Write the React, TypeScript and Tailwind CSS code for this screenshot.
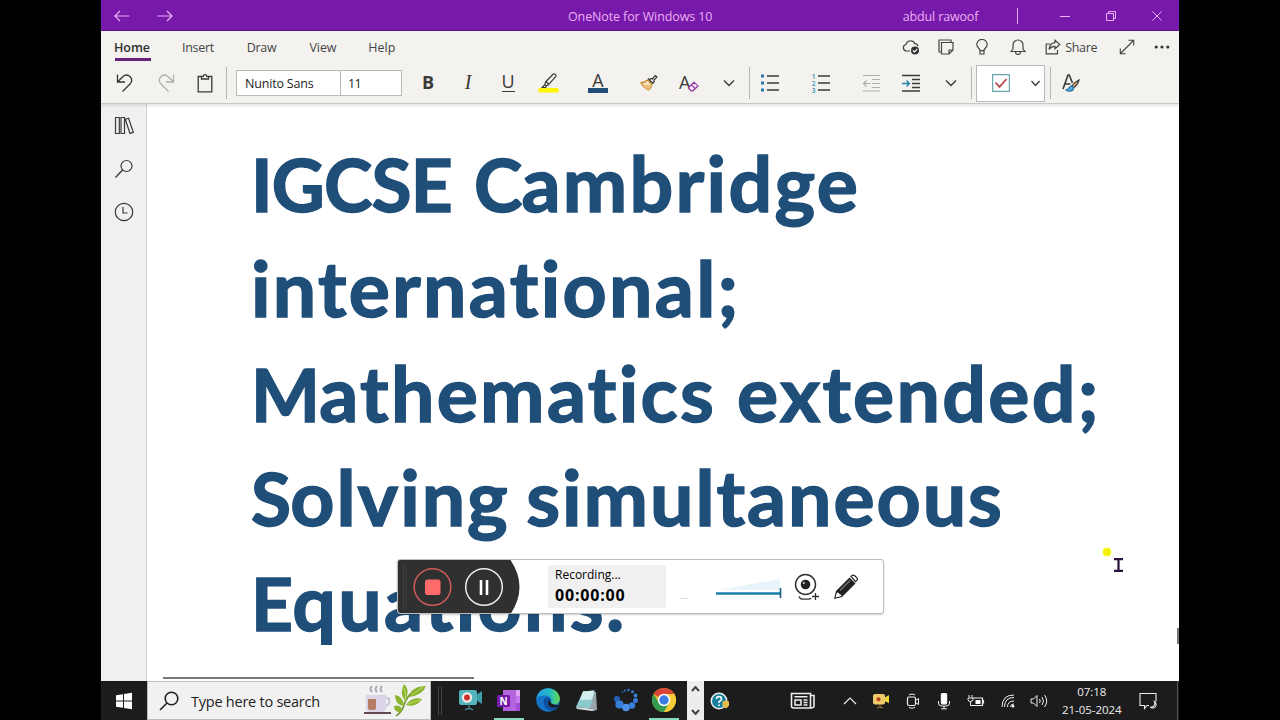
import React from "react";

type IconProps = { w: number; h: number; className?: string; children: React.ReactNode };

function Icon({ w, h, className = "", children }: IconProps) {
  return (
    <svg width={w} height={h} viewBox={`0 0 ${w} ${h}`} fill="none" stroke="currentColor" strokeWidth="1.2" className={`shrink-0 ${className}`}>
      {children}
    </svg>
  );
}

function Cell({ className = "w-10", children }: { className?: string; children: React.ReactNode }) {
  return <div className={`flex h-full shrink-0 items-center justify-center ${className}`}>{children}</div>;
}

function Divider({ className = "" }: { className?: string }) {
  return <div className={`h-8 w-px shrink-0 bg-[#b9b7b5] ${className}`} />;
}

function Chevron() {
  return (
    <Icon w={12} h={8}>
      <path d="M1 1.5 6 6.5 11 1.5" strokeWidth="1.4" />
    </Icon>
  );
}

function TitleBar() {
  return (
    <header className="flex h-[31px] items-center border-b border-[#5c1487] bg-[#7719aa] pt-px text-[#eab0f5]">
      <Cell className="w-[41px]">
        <Icon w={16} h={12}>
          <path d="M15.5 6H1M6 1 1 6l5 5" />
        </Icon>
      </Cell>
      <Cell className="w-[46px]">
        <Icon w={16} h={12}>
          <path d="M.5 6H15M10 1l5 5-5 5" />
        </Icon>
      </Cell>
      <div className="ml-[380px] w-[337px] whitespace-nowrap text-[12.5px] tracking-[-0.12px] pt-[3px]">OneNote for Windows 10</div>
      <div className="w-[115px] whitespace-nowrap pt-[3px] text-[12.5px] tracking-[-0.15px]">abdul rawoof</div>
      <div className="h-4 w-px bg-[#eab0f5]" />
      <Cell className="ml-[24px] w-[46px]">
        <Icon w={10} h={10}>
          <path d="M0 5.5h10" strokeWidth="1" />
        </Icon>
      </Cell>
      <Cell className="w-[46px]">
        <Icon w={10} h={10}>
          <path d="M.5 2.5h7v7h-7zM2.5 2.500v-2h7v7h-2" strokeWidth="1" />
        </Icon>
      </Cell>
      <Cell className="w-[45px]">
        <Icon w={10} h={10}>
          <path d="M.5.5l9 9M9.500.5l-9 9" strokeWidth="1" />
        </Icon>
      </Cell>
    </header>
  );
}

function TabRow() {
  return (
    <nav className="flex h-8 items-center text-[12.5px] text-[#444]">
      <div className="ml-[13px] flex h-full w-9 flex-col items-center">
        <span className="mt-[7px] h-[20px] text-[12.5px] leading-[20px] font-semibold tracking-[0px] text-[#2f2f2f]">Home</span>
        <span className="ml-[2px] h-[3px] w-9 shrink-0 bg-[#68217a]" />
      </div>
      <span className="ml-[32px] w-[65px] pt-[2px] tracking-[-0.3px]">Insert</span>
      <span className="w-[63px] pt-[2px] tracking-[-0.3px]">Draw</span>
      <span className="w-[59px] pt-[2px] tracking-[-0.1px]">View</span>
      <span className="w-[528px] pt-[2px]">Help</span>
      <Cell className="w-[34px]">
        <Icon w={18} h={16} className="text-[#444]">
          <path d="M8 12H4.300A3.300 3.300 0 0 1 4 5.500 4.600 4.600 0 0 1 12.800 4.700c1.600 0 2.800.9 3.100 2.400" />
          <circle cx="13" cy="11.500" r="4" fill="#333" stroke="none" />
          <path d="M11 11.500l1.500 1.500 2.700-2.900" stroke="#fff" />
        </Icon>
      </Cell>
      <Cell className="w-[36px]">
        <Icon w={16} h={16} className="text-[#444]">
          <path d="M3 13H1V1h12v2M3.500 3.500h11.500v7.500l-4 4H3.500zM11 15v-4h4" />
        </Icon>
      </Cell>
      <Cell className="w-[36px]">
        <Icon w={14} h={16} className="text-[#444]">
          <path d="M5 11.500C5 9 1.800 8.800 1.800 5.600a5.200 5.200 0 0 1 10.400 0C12.200 8.800 9 9 9 11.500v3.500H5zM5 11.700h4" />
        </Icon>
      </Cell>
      <Cell className="w-[35px]">
        <Icon w={16} h={16} className="text-[#444]">
          <path d="M1 12.500 3 10V6a5 5 0 0 1 10 0v4l2 2.500zM5.500 13a2.500 2.500 0 0 0 5 0" />
        </Icon>
      </Cell>
      <Cell className="w-[35px]">
        <Icon w={16} h={16} className="text-[#444]">
          <path d="M5 5H1.200v9.800H12.500V11M10 1.200l4.800 4.300L10 9.800V7.300C7.500 7.200 5.500 8.200 4 10.300 4.500 6.500 6.500 4 10 3.700z" />
        </Icon>
      </Cell>
      <span className="-ml-[5px] w-[44px] pt-[2px] tracking-[-0.3px]">Share</span>
      <Cell className="w-[36px]">
        <Icon w={16} h={16} className="text-[#444]">
          <path d="M1.500 14.500l13-13M9.500 1.300h5.200v5.200M1.300 9.500v5.200h5.200" strokeWidth="1.1" />
        </Icon>
      </Cell>
      <Cell className="w-[34px]">
        <Icon w={16} h={4} className="text-[#333]">
          <g fill="currentColor" stroke="none">
            <circle cx="2.200" cy="2" r="1.600" />
            <circle cx="8" cy="2" r="1.600" />
            <circle cx="13.800" cy="2" r="1.600" />
          </g>
        </Icon>
      </Cell>
    </nav>
  );
}

function ToolRow() {
  return (
    <div className="flex h-10 items-center text-[#3b3a39]">
      <Cell className="w-12">
        <Icon w={18} h={20} className="text-[#333]">
          <path d="M1.500 1.500v7.500h7.500M2 8.500 7 3.500Q10.500.500 14 3.500q3.500 3.800 0 7.500L6.500 18.500" strokeWidth="1.300" />
        </Icon>
      </Cell>
      <Cell className="w-[34px]">
        <Icon w={18} h={20} className="text-[#b0aeac]">
          <path d="M16.500 1.500v7.500H9M16 8.500 11 3.500Q7.500.500 4 3.500q-3.500 3.800 0 7.500l7.500 7.500" strokeWidth="1.300" />
        </Icon>
      </Cell>
      <Cell className="w-[43px]">
        <Icon w={16} h={20}>
          <path d="M4.500 3.500H1.200v15.300h13.600V3.500h-3.300M4.500 6V3.300h1.800a1.700 1.700 0 0 1 3.400 0h1.800V6z" strokeWidth="1.300" />
        </Icon>
      </Cell>
      <Divider />
      <div className="ml-[9px] flex h-[26px] w-[166px] items-center border border-[#bbb9b7] bg-white text-[12.500px] text-[#222]">
        <span className="flex h-full w-[104px] items-center border-r border-[#bbb9b7] pt-[2px] pl-2 tracking-[-0.18px]">Nunito Sans</span>
        <span className="pt-[2px] pl-[7px] tracking-[-0.6px]">11</span>
      </div>
      <Cell className="ml-[6px] w-10">
        <span className="mb-[2px] text-[18px] font-bold">B</span>
      </Cell>
      <Cell>
        <span className="mb-[2px] font-['Liberation_Serif',serif] text-[20px] italic">I</span>
      </Cell>
      <Cell>
        <span className="-mt-px h-[19px] w-[13px] border-b border-[#3b3a39] text-center text-[18px] leading-[16px]">U</span>
      </Cell>
      <Cell>
        <Icon w={22} h={22}>
          <path d="M1.500 16h20v4.500h-20z" fill="#fff500" stroke="none" />
          <path d="M9 9.500l7-7.200c1.500-1.400 4 .7 2.700 2.400l-6.800 7.500zM8.800 9.500l-1 3.300 1.500 1 2.600-1.400M7.600 13l-2.400 2.500h3.500l.8-1.500" />
        </Icon>
      </Cell>
      <Cell className="w-[60px]">
        <div className="flex w-5 flex-col items-center border-b-[5px] border-[#1f4e79] pb-px">
          <span className="h-[14px] text-[18px] leading-[15px]">A</span>
        </div>
      </Cell>
      <Cell className="ml-px w-10">
        <Icon w={18} h={18}>
          <path d="M1 8.500c3.500.3 5.500-1.500 6.500-2.500l4.500 4.500C11.500 13 10 15 8.500 16 5.500 14.500 2.500 12 1 8.500z" fill="#f7e3c0" stroke="#c8852b" />
          <path d="M2.500 10.500c4 .8 7 .5 9 0-1 2.800-2 4.500-3 5.500-2.500-1.300-4.500-3-6-5.500z" fill="#eec078" stroke="none" />
          <path d="M8 4.500l5.300 5.200M9.500 5.800l1.500-1.300 1.300.5 3-3.500 1.700 1.600-3.200 3.100.6 1.500-1.500 1.500" />
        </Icon>
      </Cell>
      <Cell>
        <div className="flex items-start">
          <span className="w-[9px] text-[18px] leading-[17px]">A</span>
          <Icon w={11} h={11} className="mt-[7px]">
            <path d="M1 6l5-4.800 4 3.700L5 9.800H3.200L1 7.700zM3.500 4l3.700 3.700" fill="#f5e4f8" stroke="#8e3a9e" />
          </Icon>
        </div>
      </Cell>
      <Cell><Chevron /></Cell>
      <Divider />
      <Cell>
        <Icon w={18} h={18}>
          <path d="M6 2h12M6 9h12M6 16h12" strokeWidth="1.300" />
          <path d="M0 2h3M0 9h3M0 16h3" stroke="#2878ae" strokeWidth="3" />
        </Icon>
      </Cell>
      <Cell className="ml-[11px] w-10">
        <div className="flex items-center gap-[3px]">
          <div className="flex flex-col text-[6.500px] leading-[7px] font-semibold text-[#308db3]">
            <span>1</span>
            <span>2</span>
            <span>3</span>
          </div>
          <Icon w={12} h={18}>
            <path d="M0 2h12M0 9h12M0 16h12" strokeWidth="1.300" />
          </Icon>
        </div>
      </Cell>
      <Cell className="ml-[10px] w-10">
        <Icon w={18} h={18} className="text-[#b0aeac]">
          <path d="M1 1.500h17M10 5.500h8M10 9.500h8M10 13.500h8M1 17h17M8.500 9.500H1.500M4.500 6.500l-3 3 3 3" />
        </Icon>
      </Cell>
      <Cell>
        <Icon w={18} h={18}>
          <path d="M0 1.500h18M10 5.500h8M10 9.500h8M10 13.500h8M0 17h18" strokeWidth="1.300" />
          <path d="M0 9.500h7.500M4.500 6.500l3 3-3 3" stroke="#1c86a8" strokeWidth="1.300" />
        </Icon>
      </Cell>
      <Cell><Chevron /></Cell>
      <Divider />
      <div className="ml-1 flex h-[37px] w-[69px] items-center border border-[#bcbab8] bg-white">
        <Cell className="w-[48px]">
          <Icon w={18} h={18}>
            <path d="M.6.6h16.800v16.800H.6z" stroke="#6aa5ae" />
            <path d="M3.500 8.500l4 4.300L14.500 5" stroke="#b84a52" strokeWidth="1.800" />
          </Icon>
        </Cell>
        <Icon w={9} h={7} className="ml-[6px]">
          <path d="M.5 1l4 4.500 4-4.500" strokeWidth="1.300" />
        </Icon>
      </div>
      <Divider className="ml-[5px]" />
      <Cell>
        <Icon w={18} h={20}>
          <path d="M1 16 6 2h1.200L10.500 10M3 11h5.500" strokeWidth="1.600" />
          <path d="M17 7c-3 1.500-6 4-7.200 6l1.700 1.700c2-1.300 4.500-4 5.500-7.700z" fill="#e9b17b" />
          <path d="M9.800 13c-2.800-.3-2 3-5.800 4 3 2 7.800 1 7.500-2.300z" fill="#52b2e6" stroke="#26709d" />
        </Icon>
      </Cell>
    </div>
  );
}

function Sidebar() {
  return (
    <aside className="flex w-[46px] shrink-0 flex-col items-center border-r border-[#d3d4de] bg-[#f2f0ee] pt-[12px] text-[#3b3a39]">
      <Icon w={20} h={20}>
        <path d="M1.500 1.500h3.800v16H1.500zM7 1.500h3.500v16H7zM11.300 3.300l3.300-1.100 4.700 14.100-3.300 1.100z" />
      </Icon>
      <Icon w={20} h={20} className="mt-[23px]">
        <circle cx="12.500" cy="7" r="5.500" />
        <path d="M8.500 11 1.500 18.500" strokeWidth="1.400" />
      </Icon>
      <Icon w={20} h={20} className="mt-[23px]">
        <circle cx="10" cy="10" r="8.700" />
        <path d="M9 5v6h4.500" />
      </Icon>
    </aside>
  );
}

function Cap({ children }: { children: React.ReactNode }) {
  return <span className="text-[73px] tracking-[-0.8px]">{children}</span>;
}

function Note() {
  return (
    <main className="relative flex-1 overflow-hidden bg-white">
      <div className="pt-[26px] pl-[104px] font-['Lato',sans-serif] text-[77px] font-bold whitespace-nowrap text-[#1f4e79] [-webkit-text-stroke:1.500px_#1f4e79]">
        <div className="h-[104.800px] leading-[104.800px] tracking-[2.300px] [word-spacing:5px]"><Cap>IGCSE C</Cap>ambridge</div>
        <div className="h-[104.800px] leading-[104.800px] tracking-[2.300px]">international;</div>
        <div className="h-[104.800px] leading-[104.800px] tracking-[2.300px]"><Cap>M</Cap>athematics extended;</div>
        <div className="h-[104.800px] leading-[104.800px] tracking-[1.950px] [word-spacing:-4px]"><Cap>S</Cap>olving simultaneous</div>
        <div className="h-[104.800px] leading-[104.800px] tracking-[2.300px]"><Cap>E</Cap>quations.</div>
      </div>
      <div className="absolute top-[573px] left-4 h-[2px] w-[311px] bg-[#777]" />
      <div className="absolute top-[524px] right-0 h-4 w-[2px] bg-[#777]" />
      <div className="absolute top-[444px] left-[956px] size-[8px] rounded-full bg-[#f4f000] shadow-[0_0_3px_#ffff66]" />
      <svg className="absolute top-[454px] left-[967px]" width="10" height="14" viewBox="0 0 10 14">
        <path d="M0 1.200h9M0 12.800h9M4.500 1v12" stroke="#2c123f" strokeWidth="2.200" />
      </svg>
    </main>
  );
}

function Recorder() {
  return (
    <div className="absolute top-[559px] left-[397px] flex h-[55px] w-[487px] items-center overflow-hidden rounded-[3px] border border-[#bdbdbd] bg-white text-black shadow-[0_1px_2px_#0003]">
      <svg className="shrink-0" width="122" height="54" viewBox="0 0 122 54">
        <path d="M0 0h112.500q18 27 0 54H0z" fill="#303030" />
        <path d="M5.500 5v44M8 5v44" stroke="#3e3e3e" />
        <circle cx="34.500" cy="27" r="18.300" fill="none" stroke="#cf5a5c" strokeWidth="1.500" />
        <rect x="27" y="19.500" width="15.500" height="15.500" rx="2.500" fill="#ff6b6b" />
        <circle cx="86" cy="27" r="18.300" fill="none" stroke="#eee" strokeWidth="1.500" />
        <path d="M83 20v15M89 20v15" stroke="#fff" strokeWidth="2.600" />
      </svg>
      <div className="ml-[28px] flex h-[43px] w-[118px] shrink-0 flex-col rounded-[3px] bg-[#f0f0f0] pl-[7px]">
        <span className="h-[19px] text-[12px] leading-[19px] tracking-[0px]">Recording...</span>
        <span className="text-[16px] leading-[23px] font-bold tracking-[0.8px]">00:00:00</span>
      </div>
      <div className="mt-6 ml-[14px] h-px w-2 bg-[#ddd]" />
      <Icon w={67} h={22} className="ml-[28px]">
        <path d="M2 14 64 3v11z" fill="#e8f4f9" stroke="none" />
        <path d="M0 17.500h65" stroke="#1a80ad" strokeWidth="2.400" />
        <path d="M64.500 12v10.500" stroke="#1b6384" strokeWidth="1.700" />
      </Icon>
      <Icon w={26} h={28} className="ml-[11px] text-[#333]">
        <circle cx="11.500" cy="11.500" r="10" strokeWidth="1.500" />
        <circle cx="11.500" cy="11.500" r="4.800" fill="#222" stroke="none" />
        <circle cx="9.800" cy="10" r="1.200" fill="#aaa" stroke="none" />
        <path d="M5 23.500q1 2.700 4 2.700h5q2.500 0 3-1.200M18 23.500h7M21.500 20v7" strokeWidth="1.300" />
      </Icon>
      <Icon w={26} h={26} className="ml-[13px] text-[#222]">
        <path d="M1 25 3 17 16.500 3.500 22.500 9.500 9 23z" fill="currentColor" stroke="none" />
        <path d="M2.500 23.500l1.500-5q2.500 0 2.500 1.800 2 0 2 1.800z" fill="#fff" stroke="none" />
        <path d="M7 16.500 17 6.500" stroke="#777" />
        <path d="M18 2.500l1-1q1.500-1 3 .5l1.700 1.700q1.300 1.300.3 2.500l-1.500 1.500z" fill="#fff" />
      </Icon>
    </div>
  );
}

function SearchBox() {
  return (
    <div className="flex h-full w-[284px] shrink-0 items-center border border-[#bdbdbd] bg-[#f1f1f1] text-[#222]">
      <Icon w={20} h={20} className="ml-[11px]">
        <circle cx="12.500" cy="7.500" r="6.300" strokeWidth="1.600" />
        <path d="M8 12 1 19" strokeWidth="1.600" />
      </Icon>
      <span className="ml-[12px] w-[170px] pt-[2px] text-[14.500px] tracking-[-0.24px] whitespace-nowrap">Type here to search</span>
      <svg width="66" height="36" viewBox="0 0 66 36" className="ml-px">
        <path d="M10 9q-3-3 0-6M15 9q-3-3 0-6M20 9q-3-3 0-6" fill="none" stroke="#aaa1ad" strokeWidth="1.700" />
        <path d="M23 15h2q2.500 0 2.500 3.500T23 23" fill="none" stroke="#c9c1dc" strokeWidth="1.800" />
        <path d="M4 12h20v13q0 4-5 4H9q-5 0-5-4z" fill="#dcd5e8" />
        <path d="M6 16h8v9q0 2-2 2H8q-2 0-2-2z" fill="#b57d65" />
        <path d="M2 29h27v2H2z" fill="#634951" />
        <path d="M34 33q6-4 8-11t10-15" fill="none" stroke="#6a8f25" strokeWidth="1.500" />
        <path d="M42 1q7 6 1 17-6-8-1-17zM33 12q8 1 9 11-9-1-9-11zM32 23q8-2 8 6-8 1-8-6zM47 14q3-11 17-11-3 9-17 11zM44 22q6-9 16-6-6 9-16 6z" fill="#8bb52f" />
        <path d="M42 5q3 6 1 13M50 12l11-8M46 21l12-4" fill="none" stroke="#bfd965" />
      </svg>
    </div>
  );
}

function TaskApp({ active = false, children }: { active?: boolean; children: React.ReactNode }) {
  return (
    <div className="flex h-full w-[38.800px] shrink-0 flex-col items-center">
      <div className="flex h-[37px] items-center pt-px">
        <svg width="26" height="26" viewBox="0 0 26 26">{children}</svg>
      </div>
      {active && <div className="h-[2px] w-[30px] bg-[#87d9c3]" />}
    </div>
  );
}

function Taskbar() {
  return (
    <footer className="flex h-[39px] items-center bg-[#1c1c1c] text-[#eee]">
      <Cell className="w-[46px]">
        <svg width="18" height="18" viewBox="0 0 18 18" fill="#fff">
          <path d="M1 3.300 8 2.200v6.300H1zM9 2l8-1.200v7.700H9zM1 9.500h7v6.300l-7-1.100zM9 9.500h8v7.700L9 16z" />
        </svg>
      </Cell>
      <SearchBox />
      <div className="ml-[7px] h-[29px] w-[4px] border-x border-[#444]" />
      <div className="ml-[9px] flex h-full">
        <TaskApp>
          <path d="M19 8l6-4v13l-6-4z" fill="#3e9daa" />
          <rect x="2" y="3" width="18" height="15" rx="2" fill="#53b4be" />
          <circle cx="10" cy="10.500" r="5.200" fill="#f2e9e4" />
          <circle cx="10" cy="10.500" r="2.900" fill="#c92b25" />
          <path d="M12 16v6M8 23q4-3 8 0" fill="none" stroke="#4a8d96" strokeWidth="1.300" />
        </TaskApp>
        <TaskApp active>
          <path d="M7 3h17v21H7z" fill="#a34ad8" />
          <path d="M7 3h13v21H7z" fill="#b463df" />
          <path d="M20 3h4v6h-4z" fill="#dda2f5" />
          <path d="M20 9h4v7h-4z" fill="#c279e9" />
          <rect x="1" y="8" width="13" height="12" rx="1" fill="#7719aa" />
          <text x="7.500" y="17.500" textAnchor="middle" fontSize="10" fontWeight="700" fill="#fff">N</text>
        </TaskApp>
        <TaskApp>
          <defs>
            <linearGradient id="edgeTop" x1="0" x2="1">
              <stop stopColor="#2398e6" />
              <stop offset=".6" stopColor="#27bdbe" />
              <stop offset="1" stopColor="#68d64c" />
            </linearGradient>
          </defs>
          <circle cx="13" cy="13" r="11.800" fill="#1473c6" />
          <path d="M1.300 12C2.500 4.500 8 1.200 13 1.200c7 0 11.800 5.300 11.800 10.500 0 5-5.500 7.200-9.600 5 3-3.500.5-8-4.700-8.200C6.500 8.300 2.500 9.500 1.300 12z" fill="url(#edgeTop)" />
          <path d="M9.500 11.500c-3 5.500 1.500 12 7.500 12 3 0 5.500-2 6.500-4-4 1.500-9 .5-9.500-4-.2-2 .8-2.500.8-3.500-.8-1.800-4-2-5.300-.5z" fill="#0d4f9c" />
          <path d="M15 12.500c-.5 4 4 6 9 5.500l-1.500 2c-5 1.500-9 .3-9.300-4 0-1.500.8-2.300 1.800-3.500z" fill="#1c1c1c" />
        </TaskApp>
        <TaskApp>
          <path d="M9 4 22 5 23 23 14 21z" fill="#9aa5a9" />
          <path d="M9 4.500 20.500 3.500 16 21.500 2 20z" fill="#8cc9cf" />
          <path d="M9 4.500 20.500 3.500 18 12.500 6 13z" fill="#d2eeee" />
          <path d="M2 20l14 1.500 7 1.500-5 1L3 22z" fill="#d8dede" />
        </TaskApp>
        <TaskApp>
          <g fill="#377edb">
            <circle cx="4" cy="12" r="3.100" fill="#245eb5" />
            <circle cx="6.500" cy="17.500" r="4.100" />
            <circle cx="13" cy="20.500" r="3.800" fill="#4a92e8" />
            <circle cx="19" cy="18.500" r="3.200" />
            <circle cx="22.500" cy="13.500" r="2.500" />
            <circle cx="22.500" cy="8.500" r="1.900" />
            <circle cx="19.500" cy="4.800" r="1.500" />
            <circle cx="15.500" cy="3" r="1.200" />
            <circle cx="11.800" cy="3.500" r="1" />
            <circle cx="9.500" cy="5.300" r=".8" />
          </g>
        </TaskApp>
        <TaskApp active>
          <circle cx="13" cy="13" r="12" fill="#dfb92b" />
          <path d="M13 13 2.600 7A12 12 0 0 1 23.400 7z" fill="#d94436" />
          <path d="M2.600 7A12 12 0 0 0 13 25l5.200-9H7.800z" fill="#359b50" />
          <path d="M23.400 7H13l5.200 9L13 25A12 12 0 0 0 23.400 7z" fill="#f8cc38" />
          <circle cx="13" cy="13" r="6.200" fill="#fff" />
          <circle cx="13" cy="13" r="4.700" fill="#3b7de0" />
        </TaskApp>
      </div>
      <div className="ml-[3px] flex h-full w-[17px] flex-col items-center justify-between bg-[#ededed] py-[5px] text-[#444]">
        <Icon w={9} h={6}>
          <path d="M1 5l3.500-4L8 5" strokeWidth="2" />
        </Icon>
        <Icon w={9} h={6}>
          <path d="M1 1l3.500 4L8 1" strokeWidth="2" />
        </Icon>
      </div>
      <Cell className="ml-[6px] w-[20px]">
        <svg width="20" height="20" viewBox="0 0 20 20">
          <circle cx="9" cy="10" r="8.500" fill="#eee" />
          <circle cx="9" cy="10" r="7" fill="#167f9d" />
          <path d="M6.500 8q0-2.500 2.500-2.500T11.500 8q0 1.300-1.500 2t-1 2M9 13.500v1.500" fill="none" stroke="#fff" strokeWidth="1.700" />
          <path d="M12.500 10.500 16 9.500l3 1v4q-1 2-3 3-2.500-1-3.500-3z" fill="#e7bd4b" />
        </svg>
      </Cell>
      <Cell className="ml-[60px] w-[26px]">
        <Icon w={26} h={18}>
          <path d="M1.500 1.500h19v14.500h-17q-2 0-2-2zM20.500 3.500h3.500v10.500q0 2-3.500 2" strokeWidth="1.600" />
          <path d="M4.500 4.800h13M13.500 8h4M13.500 10.500h4M13.500 13h4M5 8h6v5H5z" strokeWidth="1.500" />
        </Icon>
      </Cell>
      <Cell className="ml-[18px] w-[32px]">
        <Icon w={14} h={8}>
          <path d="M1 7l6-6 6 6" />
        </Icon>
      </Cell>
      <Cell className="w-[31px]">
        <svg width="18" height="16" viewBox="0 0 18 16">
          <path d="M12 5l5-3v8l-5-2z" fill="#f1d63e" />
          <rect x="1" y="1" width="12" height="10.500" rx="2" fill="#eeca68" />
          <circle cx="6.500" cy="6.300" r="2" fill="#b53a20" />
          <path d="M8 11.500v2M5 15q2-2 6 0" fill="none" stroke="#a89042" />
        </svg>
      </Cell>
      <Cell className="w-[32px]">
        <Icon w={14} h={16}>
          <rect x="1.500" y="4" width="8" height="8.500" rx="1.500" />
          <path d="M9.500 7.500l3-2v6l-3-2M3 1.800q3-1.500 6 0M3 14.500q3 1.500 6 0" strokeWidth="1" />
        </Icon>
      </Cell>
      <Cell className="w-[31px]">
        <Icon w={14} h={18}>
          <rect x="3.800" y="1" width="6.400" height="11.500" rx="1.500" fill="#fff" stroke="none" />
          <path d="M1.500 9v2q0 3 3 3h5q3 0 3-3V9M7 14v2.500M4 16.800h6" strokeWidth="1" />
        </Icon>
      </Cell>
      <Cell className="w-[32px]">
        <Icon w={18} h={14}>
          <path d="M6 4h9.500v7.500H5.500M16.500 6v3.500" />
          <path d="M8.500 6h5v4h-5z" fill="#fff" stroke="none" />
          <path d="M2 1v2.500M5 1v2.500M1 4h5v1.500q0 2-2.500 2T1 5.500zM3.500 7.500v4H6" strokeWidth="1" />
        </Icon>
      </Cell>
      <Cell className="w-[32px]">
        <Icon w={14} h={14}>
          <path d="M1 13q0-12 12-12M3.500 13q0-9.500 9.500-9.500M6.500 13Q6.500 7 13 7M9.500 13q0-3 3.500-3" strokeWidth="1" />
          <circle cx="12" cy="12.300" r="1.300" fill="#fff" stroke="none" />
        </Icon>
      </Cell>
      <Cell className="w-[30px]">
        <Icon w={18} h={14}>
          <path d="M1 5h2.500L7 1.500v11L3.500 9H1zM9.500 5q1.500 2 0 4M12 3q3 4 0 8M14.500 1q4.500 6 0 12" strokeWidth="1" />
        </Icon>
      </Cell>
      <div className="ml-[5px] flex w-[66px] flex-col items-center text-[11.500px] leading-[18px] tracking-[-0.04px] whitespace-nowrap">
        <span>07:18</span>
        <span>21-05-2024</span>
      </div>
      <Cell className="ml-[13px] w-[20px]">
        <Icon w={18} h={18}>
          <path d="M10 13.500H8L5.500 16.500v-3H1v-12h16v8M15.500 9.500c1 3.500-.5 5.500-4 5.700 1.500 1.500 5 1 5.500-1.700.3-1.700-.3-3-1.500-4z" strokeWidth="1.100" />
        </Icon>
      </Cell>
      <div className="ml-auto h-full w-px bg-[#555]" />
      <div className="h-full w-px" />
    </footer>
  );
}

export default function App() {
  return (
    <div className="flex h-[720px] w-[1280px] justify-center overflow-hidden bg-black font-['Open_Sans','Noto_Sans',sans-serif]">
      <div className="relative flex w-[1078px] flex-col">
        <TitleBar />
        <div className="z-10 h-[73px] shrink-0 border-b border-[#c9c7c5] bg-[#f3f2ef] shadow-[0_2px_3px_#0000001a]">
          <TabRow />
          <ToolRow />
        </div>
        <div className="flex h-[577px] shrink-0">
          <Sidebar />
          <Note />
        </div>
        <Taskbar />
      </div>
      <div className="absolute top-0 left-0 size-0">
        <Recorder />
      </div>
    </div>
  );
}
